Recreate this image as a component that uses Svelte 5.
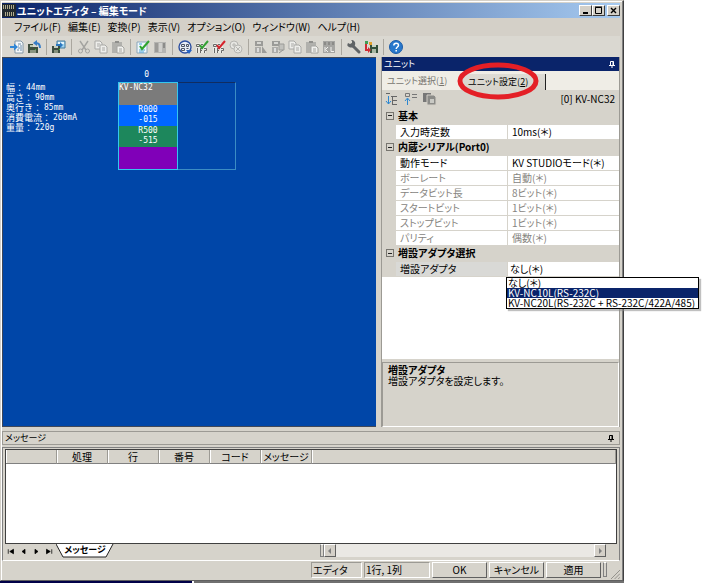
<script>
  const menus = ['ファイル(F)', '編集(E)', '変換(P)', '表示(V)', 'オプション(O)', 'ウィンドウ(W)', 'ヘルプ(H)'];

  const tools = [
    'import', 'restore', '|', 'transfer', '|', 'cut', 'copy', 'paste', '|', 'check', 'module', '|',
    'refresh', 'verify', 'errors', 'search', '|', 'card', 'cards', 'copies', 'clip', 'kl', '|',
    'wrench', 'convert', '|', 'help'
  ];

  const specs = [
    ['幅：', '44mm'],
    ['高さ：', '90mm'],
    ['奥行き：', '85mm'],
    ['消費電流：', '260mA'],
    ['重量：', '220g']
  ];

  const groups = [
    { title: '基本', rows: [{ name: '入力時定数', value: '10ms(＊)' }] },
    {
      title: '内蔵シリアル(Port0)',
      rows: [
        { name: '動作モード', value: 'KV STUDIOモード(＊)' },
        { name: 'ボーレート', value: '自動(＊)', off: true },
        { name: 'データビット長', value: '8ビット(＊)', off: true },
        { name: 'スタートビット', value: '1ビット(＊)', off: true },
        { name: 'ストップビット', value: '1ビット(＊)', off: true },
        { name: 'パリティ', value: '偶数(＊)', off: true }
      ]
    },
    { title: '増設アダプタ選択', rows: [{ name: '増設アダプタ', value: 'なし(＊)', open: true }] }
  ];

  const options = ['なし(＊)', 'KV-NC10L(RS-232C)', 'KV-NC20L(RS-232C + RS-232C/422A/485)'];
  let highlighted = $state(1);

  const columns = ['', '処理', '行', '番号', 'コード', 'メッセージ'];
  const steps = [
    ['先頭', 'M3 3v6M10 3L5 6l5 3z'],
    ['前へ', 'M8 3L4 6l4 3z'],
    ['次へ', 'M4 3l4 3-4 3z'],
    ['末尾', 'M2 3l5 3-5 3zM9 3v6']
  ];
</script>

{#snippet pin()}
  <svg class="pin" viewBox="0 0 8 8" aria-hidden="true">
    <path d="M2.500 5V1.500h3V5M1 5.500h6M4 5.500V8M5 1.500V5" fill="none" stroke="currentColor" />
  </svg>
{/snippet}

{#snippet icon(name)}
  <svg viewBox="0 0 14 14" aria-hidden="true">
    {#if name === 'import'}
      <path d="M5 1h6l2 2v10H5z" fill="#f4f8fb" stroke="#8499a8" />
      <path d="M8 4h3M8 6h1M10 6h2M8 8h4M7 10h2M10 10h2" stroke="#6c8ca8" />
      <path d="M0 6h4V3.500l4 3.500-4 3.500V8H0z" fill="#2f86d6" />
    {:else if name === 'restore'}
      <path d="M1 4h5v3h5v6H1z" fill="#405040" /><path d="M3 5h3v2H3z" fill="#b9c6b0" />
      <path d="M3 10h6v3H3z" fill="#889480" /><path d="M8 9h1v1H8z" fill="#3dbb3d" />
      <path d="M13 8c0-3-1-5-4-5" stroke="#377dc8" stroke-width="2" fill="none" /><path d="M10 0v6L6 3z" fill="#377dc8" />
    {:else if name === 'transfer'}
      <path d="M5 1h8v7H5z" fill="#9fd3f0" stroke="#477b9b" /><path d="M6 2h6v2H6z" fill="#e4f5fc" />
      <path d="M0 6h8v7H0z" fill="#3c4c40" /><path d="M2 6h4v2H2z" fill="#c4cec0" /><path d="M2 10h4v3H2z" fill="#85917c" />
      <path d="M4 4h4V2l3 3-3 3V6H4z" fill="#2b78c0" /><path d="M7 9h1v1H7z" fill="#3c3" />
    {:else if name === 'cut'}
      <g fill="none" stroke="#a3a3a0"><path d="M3 1l6 9M11 1L5 10" stroke-width="1.400" /><circle cx="3.500" cy="11" r="2" /><circle cx="10.500" cy="11" r="2" /></g>
    {:else if name === 'copy' || name === 'copies'}
      <g fill="#eeeeeb" stroke="#a9a9a6"><path d="M1 1h5l2 2v6H1z" /><path d="M6 5h5l2 2v6H6z" /><path d="M3 4h3M3 6h2M8 8h3M8 10h3" /></g>
    {:else if name === 'paste' || name === 'clip'}
      <path d="M1 2h10v11H1z" fill="#b1b1ad" /><path d="M4 1h4v2H4z" fill="#8f8f8c" />
      <path d="M6 6h5l2 2v5H6z" fill="#f1f1ee" stroke="#a4a4a0" /><path d="M8 9h3M8 11h3" stroke="#a4a4a0" />
    {:else if name === 'check'}
      <path d="M1 2h10v11H1z" fill="#eef7fc" stroke="#8ca7b8" /><path d="M3 4h3M3 10h6M3 12h5" stroke="#4ba3dc" />
      <path d="M4 6l2 3 7-8" stroke="#2fa42f" stroke-width="2" fill="none" />
    {:else if name === 'module'}
      <path d="M1 2h12v11H1z" fill="#b5b5b2" /><path d="M2 3h3v9H2z" fill="#9b9b98" /><path d="M6 3h3v9H6z" fill="#d0d0cd" /><path d="M10 3h2v5h-2z" fill="#8c8c8a" />
    {:else if name === 'refresh'}
      <circle cx="7" cy="7" r="6" fill="#e8edf5" stroke="#2c4fa0" stroke-width="1.400" />
      <path d="M3.500 4.500h3v2h-3zM8.500 4.500h2v2h-2zM3.500 8.500h3v2h-3zM8.500 8.500h2" stroke="#4b5466" fill="none" /><path d="M8 10h6l-3 4z" fill="#2563c4" />
    {:else if name === 'verify' || name === 'errors'}
      <path d="M1 3h10v10H1z" fill="#e9e9e4" />
      <path d="M1.500 4.500h3v2h-3zM2.500 8v5M5 8.500h3M5.500 8v5M5 10.500h2M9 8.500h2.500v2H9.500V13M6 4.500h2" stroke="#686866" fill="none" />
      <path d="M5 5l2 3 6-7" stroke={name === 'verify' ? '#35a035' : '#d6232b'} stroke-width="2" fill="none" />
    {:else if name === 'search'}
      <g fill="#e6e6e2" stroke="#b5b5b1"><circle cx="5" cy="5" r="4" /><circle cx="9" cy="9" r="4" /><path d="M3 5h4M5 3v4M7 7l4 4M11 7l-4 4" /></g>
    {:else if name === 'card' || name === 'cards'}
      <path d="M1 1h8v5H1z" fill="#9b9b98" /><path d="M3 2h4v2H3z" fill="#d6d6d2" /><path d="M1 7h6v6H1z" fill="#acaca9" /><path d="M3 8h2v4H3z" fill="#ddd" />
      {#if name === 'card'}
        <path d="M8 6l5 7H8z" fill="#9c9c99" />
      {:else}
        <path d="M8 4h5v6H8z" fill="#c1c1bd" stroke="#9c9c98" /><path d="M8 13l4-3" stroke="#949490" />
      {/if}
    {:else if name === 'kl'}
      <path d="M1 1h12v12H1z" fill="#a5a5a2" /><path d="M2 2h2v3H2zM6 2h2v3H6zM10 2h2v3h-2z" fill="#8b8b88" />
      <path d="M3 7v5M6 7L3.500 9.500 6 12M9 7v4.500h3" stroke="#f1f1ee" fill="none" />
    {:else if name === 'wrench'}
      <path d="M5 5l7 7" stroke="#606466" stroke-width="3" stroke-linecap="round" />
      <path d="M1 3l2 1 2-1V1L4 0c3 0 5 2 4 5S4 8 2 7 0 5 1 3z" fill="#606466" />
    {:else if name === 'convert'}
      <path d="M1 1h3v3H1z" fill="#3f9e55" /><path d="M5 2h3v3H5z" fill="#e2a12c" /><path d="M6 5h8v8H6z" fill="#344f3b" />
      <path d="M8 5h4v2H8z" fill="#c8d3c4" /><path d="M8 9h4v4H8z" fill="#a9b9a5" /><path d="M2 4v6h3" stroke="#d02c34" stroke-width="2" fill="none" /><path d="M4 7l3 3-3 3z" fill="#d02c34" />
    {:else if name === 'help'}
      <circle cx="7" cy="7" r="6.500" fill="#2878cc" stroke="#1c5ca8" />
      <path d="M4.800 5.500C4.800 2.500 9.500 2.500 9.500 5.200 9.500 7 7.200 7 7.200 9M7.200 10v1.500" stroke="#fff" stroke-width="1.500" fill="none" />
    {/if}
  </svg>
{/snippet}

<div class="screen">
  <div class="window">
    <header class="titlebar">
      <svg class="logo" viewBox="0 0 14 13" aria-hidden="true">
        <path d="M0 0h14v13H0z" fill="#222a30" />
        <path d="M1.500 1v4M3.500 1v4M5.500 1v4M7.500 1v4M9.500 1v4M11.500 1v4M3.500 8v4M5.500 8v4M7.500 8v4M9.500 8v4M11.500 8v4" stroke="#b1ac8d" />
      </svg>
      <h1>ユニットエディタ – 編集モード</h1>
      <div class="winbtns">
        <button aria-label="最小化"><svg viewBox="0 0 11 9"><path d="M3 7h5" stroke="#000" stroke-width="2" /></svg></button>
        <button aria-label="最大化"><svg viewBox="0 0 11 9"><path d="M2.500 1.500h6v6h-6zM2 1h7" stroke="#000" fill="none" /></svg></button>
        <button class="close" aria-label="閉じる"><svg viewBox="0 0 11 9"><path d="M3 2l5 5M8 2L3 7" stroke="#000" stroke-width="1.400" /></svg></button>
      </div>
    </header>

    <nav class="menubar">
      {#each menus as m}<button>{m}</button>{/each}
    </nav>

    <div class="toolbar">
      {#each tools as t}
        {#if t === '|'}
          <span class="sep"></span>
        {:else}
          <button aria-label={t}>{@render icon(t)}</button>
        {/if}
      {/each}
    </div>

    <main>
      <section class="canvas">
        <dl>
          {#each specs as [k, v]}<div><dt>{k}</dt><dd>{v}</dd></div>{/each}
        </dl>
        <div class="rack">
          <div class="slot">0</div>
          <div class="bay">
            <div class="unit">
              <div class="name">KV-NC32</div>
              <div class="in">R000<br />-015</div>
              <div class="out">R500<br />-515</div>
              <div class="rest"></div>
            </div>
          </div>
        </div>
      </section>

      <aside>
        <div class="panetitle"><span>ユニット</span>{@render pin()}</div>
        <div class="tabs">
          <button class="tab dim">ユニット選択(<u>1</u>)</button>
          <button class="tab active">
            ユニット設定(<u>2</u>)
            <svg class="ring" viewBox="0 0 82 38" aria-hidden="true">
              <ellipse cx="41" cy="19" rx="38" ry="16" fill="none" stroke="#e41f26" stroke-width="5" />
            </svg>
          </button>
        </div>
        <div class="proptools">
          <button aria-label="展開"><svg viewBox="0 0 14 14"><path d="M1 1.500h4M6 4.500h6M7.500 4v9M7 8.500h5M7 12.500h5" stroke="#666" /><path d="M3.500 4v8M1 9l2.500 3L6 9" stroke="#2b87d1" fill="none" /></svg></button>
          <button aria-label="折りたたみ"><svg viewBox="0 0 14 14"><path d="M1.500 1.500h4v3h-4zM8 2.500h5M8 5.500h5" stroke="#777" fill="none" /><path d="M3.500 13V7M1 9l2.500-3L6 9" stroke="#2b87d1" fill="none" /></svg></button>
          <button class="dup" aria-label="複製"><svg viewBox="0 0 14 14"><path d="M0 1h8v9H0z" fill="#777" /><path d="M4 3h7l2 2v8H4z" fill="#8b8b88" stroke="#d4d0c8" /><path d="M7 7h4v4H7z" fill="#c9c9c4" /></svg></button>
          <span>[0] KV-NC32</span>
        </div>
        <div class="grid">
          <table>
            <colgroup><col class="gutter" /><col /><col /></colgroup>
            <tbody>
              {#each groups as g}
                <tr class="group">
                  <td><button class="fold" aria-label="折りたたむ"></button></td>
                  <th colspan="2">{g.title}</th>
                </tr>
                {#each g.rows as r}
                  <tr class:off={r.off} class:current={r.open}>
                    <td class="side"></td>
                    <td class="key">{r.name}</td>
                    <td class="val">
                      {#if r.open}
                        <select aria-label={r.name}>
                          {#each options as o}<option>{o}</option>{/each}
                        </select>
                        <ul role="listbox" aria-label={r.name}>
                          {#each options as o, i}
                            <li role="option" aria-selected={i === highlighted} onmouseenter={() => (highlighted = i)}>{o}</li>
                          {/each}
                        </ul>
                      {:else}
                        {r.value}
                      {/if}
                    </td>
                  </tr>
                {/each}
              {/each}
            </tbody>
          </table>
        </div>
        <div class="hint">
          <strong>増設アダプタ</strong>
          <p>増設アダプタを設定します。</p>
        </div>
      </aside>
    </main>

    <section class="messages">
      <div class="msgtitle"><span>メッセージ</span>{@render pin()}</div>
      <div class="msgbox">
        <div class="sheet">
          <table>
            <thead>
              <tr>{#each columns as c}<th>{c}</th>{/each}<th class="fill"></th></tr>
            </thead>
          </table>
        </div>
        <div class="sheetbar">
          {#each steps as [label, d]}
            <button class="step" aria-label={label}><svg viewBox="0 0 12 12"><path {d} stroke="#000" /></svg></button>
          {/each}
          <button class="sheettab">
            <svg viewBox="0 0 58 14" preserveAspectRatio="none" aria-hidden="true"><path d="M0 0l7 13h43L57 0" fill="#fff" stroke="#222" /></svg>
            <span>メッセージ</span>
          </button>
          <div class="scroll">
            <i></i>
            <button aria-label="左へ"><svg viewBox="0 0 10 10"><path d="M6 2L3 5l3 3z" fill="#808080" /></svg></button>
            <div class="track"></div>
            <button aria-label="右へ"><svg viewBox="0 0 10 10"><path d="M4 2l3 3-3 3z" fill="#808080" /></svg></button>
          </div>
        </div>
      </div>
    </section>

    <footer>
      <span class="cell mode">エディタ</span>
      <span class="cell pos">1行, 1列</span>
      <button>OK</button>
      <button>キャンセル</button>
      <button>適用</button>
      <i></i>
      <svg viewBox="0 0 10 10" aria-hidden="true"><path d="M0 10L10 0M4 10l6-6M8 10l2-2" stroke="#8c8a84" /></svg>
    </footer>
  </div>
  <div class="desk"></div>
</div>

<style>
  :global(body) {
    margin: 0;
    background: #fff;
  }
  .screen {
    display: flex;
    flex-direction: column;
    min-height: 100vh;
    margin-right: 81px;
    font: 10px/14px 'Noto Sans CJK JP', sans-serif;
    font-feature-settings: 'palt';
    color: #000;
    white-space: nowrap;
  }
  .screen * {
    box-sizing: border-box;
  }
  button,
  select {
    font: inherit;
    font-feature-settings: inherit;
    color: inherit;
    margin: 0;
    padding: 0;
    border: 0;
    border-radius: 0;
    background: none;
    white-space: nowrap;
  }
  svg {
    display: block;
  }
  .window {
    flex: 1;
    display: flex;
    flex-direction: column;
    background: #d6d3cb;
    border-top: 1px solid #d4d0c8;
    border-left: 1px solid #d4d0c8;
    border-right: 1px solid #404040;
    border-bottom: 1px solid #606060;
    box-shadow: inset -1px 0 #808080, inset 1px 1px #fff;
    padding: 2px 3px 1px 1px;
  }
  .titlebar {
    display: flex;
    align-items: center;
    height: 15px;
    background: linear-gradient(to right, #0a246a, #a6caf0);
    color: #fff;
  }
  .logo {
    width: 14px;
    height: 13px;
  }
  h1 {
    flex: 1;
    margin: 0 0 0 1px;
    font-size: 10px;
    line-height: 14px;
    font-weight: 700;
  }
  .winbtns {
    display: flex;
  }
  .winbtns button {
    width: 13px;
    height: 11px;
    background: #d4d0c8;
    border: 1px solid;
    border-color: #fff #404040 #404040 #fff;
  }
  .winbtns .close {
    margin-left: 2px;
  }
  .menubar {
    display: flex;
    gap: 7px;
    height: 18px;
    padding-left: 12px;
    background: #d4d0c8;
  }
  .toolbar {
    display: flex;
    align-items: center;
    gap: 3px;
    height: 21px;
    padding-left: 8px;
    background: #dad8d1;
  }
  .toolbar button,
  .proptools button {
    width: 14px;
    height: 14px;
    flex: none;
  }
  .sep {
    width: 5px;
    height: 16px;
    background: linear-gradient(#aaa79f, #aaa79f) center / 1px 100% no-repeat;
  }
  main {
    flex: 1;
    display: flex;
    gap: 5px;
  }
  .canvas {
    flex: 1;
    display: flex;
    gap: 40px;
    background: #0046a8;
    border: 1px solid #404858;
    border-right: 0;
    padding: 12px 0 0 3px;
    color: #fff;
    line-height: 10px;
  }
  dl {
    width: 72px;
    margin: 13px 0 0;
  }
  dl div {
    display: flex;
    gap: 2px;
    height: 10px;
  }
  dt {
    font-size: 9px;
    font-feature-settings: normal;
  }
  dd {
    margin: 0;
  }
  dd,
  .rack {
    font-family: 'DejaVu Sans Mono', monospace;
    font-size: 8px;
  }
  .rack {
    width: 118px;
  }
  .slot {
    height: 12px;
    padding-right: 87px;
    text-align: right;
  }
  .bay {
    border: 1px solid #3b8cc4;
    border-top-color: #102c60;
  }
  .unit {
    width: 60px;
    margin: -1px;
    border: 1px solid #35c6ee;
    text-align: center;
  }
  .unit .name {
    height: 22px;
    background: #7b7b7b;
    text-align: left;
  }
  .in {
    height: 21px;
    background: #0066ff;
  }
  .out {
    height: 21px;
    background: #1d875c;
  }
  .rest {
    height: 22px;
    background: #8000b8;
  }
  aside {
    width: 239px;
    display: flex;
    flex-direction: column;
    border-left: 1px solid #9c9a94;
    border-right: 1px solid #9c9a94;
  }
  .panetitle {
    display: flex;
    align-items: center;
    justify-content: space-between;
    height: 14px;
    padding: 0 3px 0 2px;
    background: #0a246a;
    color: #fff;
    font-size: 9px;
  }
  .pin {
    width: 8px;
    height: 8px;
  }
  .tabs {
    display: flex;
    height: 19px;
    background: #efede6;
    font-size: 9px;
  }
  .tab {
    position: relative;
    text-align: left;
    padding-left: 5px;
  }
  .tab.dim {
    width: 81px;
    color: #77756f;
  }
  .tab.active {
    width: 83px;
    height: 16px;
    margin-top: 3px;
    line-height: 12px;
    border-right: 1px solid #222;
    background: linear-gradient(#dedcd5, #d6d3cb);
  }
  .ring {
    position: absolute;
    left: -6px;
    top: -12px;
    width: 82px;
    height: 38px;
  }
  .proptools {
    display: flex;
    align-items: center;
    gap: 5px;
    height: 18px;
    padding: 0 4px 0 3px;
  }
  .proptools span {
    margin-left: auto;
  }
  .grid {
    flex: 1;
    background: #fff;
  }
  .grid table {
    width: 100%;
    table-layout: fixed;
    border-collapse: collapse;
  }
  .gutter {
    width: 14px;
  }
  .grid td,
  .grid th {
    height: 15px;
    padding: 0 0 0 4px;
    line-height: 14px;
    text-align: left;
    border-bottom: 1px solid #d6d3cb;
  }
  .grid .group td,
  .grid .group th {
    height: 16px;
    padding-left: 2px;
    background: #d6d3cb;
  }
  .grid td.side {
    background: #d6d3cb;
  }
  .grid td.key {
    border-right: 1px solid #d6d3cb;
  }
  .off {
    color: #86847e;
  }
  .current .key {
    background: #d9d9d6;
  }
  .fold {
    display: block;
    width: 8px;
    height: 8px;
    margin-left: 2px;
    border: 1px solid #77756f;
    background: linear-gradient(#222, #222) center / 4px 1px no-repeat;
  }
  .grid td.val {
    position: relative;
  }
  .grid .current td.val {
    padding-left: 2px;
  }
  select {
    display: block;
    width: 100%;
    height: 14px;
    appearance: none;
  }
  ul {
    position: absolute;
    z-index: 2;
    left: -2px;
    top: 15px;
    width: 193px;
    margin: 0;
    padding: 0;
    list-style: none;
    background: #fff;
    border: 1px solid #000;
    box-shadow: 2px 2px 1px #8888;
  }
  li {
    height: 10px;
    padding-left: 1px;
    line-height: 9px;
  }
  li[aria-selected='true'] {
    background: #0a246a;
    color: #fff;
  }
  .hint {
    height: 65px;
    margin-top: 3px;
    padding: 1px 5px;
    line-height: 11px;
    border: 1px solid #9c9a94;
    border-color: #9c9a94 #fff #fff #9c9a94;
  }
  .hint strong {
    display: block;
  }
  .hint p {
    margin: 0;
  }
  .msgtitle {
    display: flex;
    align-items: center;
    justify-content: space-between;
    height: 14px;
    margin: 4px 0 2px;
    padding: 0 4px 0 2px;
    border: 1px solid #9c9a94;
    font-size: 9px;
  }
  .msgbox {
    border: 1px solid #808080;
    border-bottom-color: #fff;
  }
  .sheet {
    height: 95px;
    margin: 1px 2px 0;
    background: #fff;
    border: 1px solid #404040;
  }
  .sheet table {
    width: 100%;
    table-layout: fixed;
    border-collapse: separate;
    border-spacing: 0;
  }
  .sheet th {
    width: 51px;
    height: 14px;
    padding: 0;
    font-weight: 400;
    line-height: 13px;
    background: #d6d3cb;
    border-right: 1px solid #9c9a94;
    border-bottom: 1px solid #808080;
    box-shadow: inset 1px 0 #fff;
  }
  .sheet .fill {
    width: auto;
  }
  .sheetbar {
    display: flex;
    height: 16px;
    padding-left: 1px;
  }
  .step {
    width: 13px;
    height: 14px;
  }
  .step svg {
    width: 9px;
    height: 9px;
    margin: 0 auto;
  }
  .sheettab {
    display: grid;
    width: 58px;
    height: 14px;
    font-size: 9px;
    font-weight: 700;
    line-height: 12px;
  }
  .sheettab > * {
    grid-area: 1 / 1;
    width: 58px;
    height: 14px;
  }
  .sheettab span {
    z-index: 1;
  }
  .scroll {
    display: flex;
    width: 286px;
    height: 13px;
    margin: 0 13px 0 auto;
  }
  .scroll i,
  footer i {
    width: 4px;
    border: 1px solid;
    border-color: #fff #808080 #808080 #808080;
  }
  .scroll button {
    width: 12px;
    background: #d4d0c8;
    border: 1px solid;
    border-color: #fff #606060 #606060 #fff;
  }
  .track {
    flex: 1;
    background: #eae8e4;
  }
  footer {
    display: flex;
    justify-content: flex-end;
    gap: 2px;
    height: 17px;
    margin-top: 1px;
  }
  .cell {
    height: 16px;
    padding-left: 1px;
    line-height: 13px;
    border: 1px solid #9c9a94;
    border-right-color: #fff;
    border-bottom-color: #fff;
  }
  .mode {
    width: 51px;
  }
  .pos {
    width: 66px;
  }
  footer button {
    width: 55px;
    height: 16px;
    border: 1px solid;
    border-color: #fff #606060 #606060 #fff;
    line-height: 12px;
  }
  footer i {
    height: 15px;
  }
  footer svg {
    width: 9px;
    height: 9px;
    margin: 8px 0 0 2px;
  }
  .desk {
    height: 2px;
    background: linear-gradient(to right, #000048 192px, #fff 192px, #fff 194px, #707070 194px);
  }
</style>
